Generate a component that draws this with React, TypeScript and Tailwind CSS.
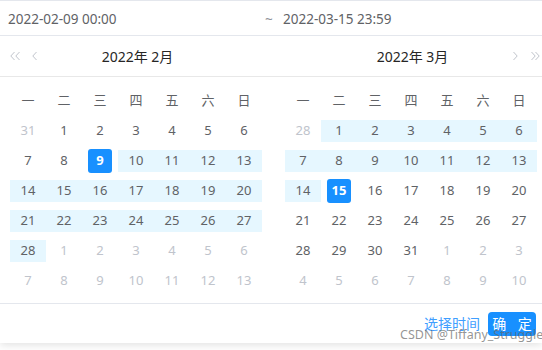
import React from 'react';

type Day = { n: number; muted?: boolean; range?: boolean; selected?: boolean };

const weekdays = ['一', '二', '三', '四', '五', '六', '日'];

const feb: Day[][] = [
  [{ n: 31, muted: true }, { n: 1 }, { n: 2 }, { n: 3 }, { n: 4 }, { n: 5 }, { n: 6 }],
  [{ n: 7 }, { n: 8 }, { n: 9, selected: true }, { n: 10, range: true }, { n: 11, range: true }, { n: 12, range: true }, { n: 13, range: true }],
  [14, 15, 16, 17, 18, 19, 20].map((n) => ({ n, range: true })),
  [21, 22, 23, 24, 25, 26, 27].map((n) => ({ n, range: true })),
  [{ n: 28, range: true }, ...[1, 2, 3, 4, 5, 6].map((n) => ({ n, muted: true }))],
  [7, 8, 9, 10, 11, 12, 13].map((n) => ({ n, muted: true })),
];

const mar: Day[][] = [
  [{ n: 28, muted: true }, ...[1, 2, 3, 4, 5, 6].map((n) => ({ n, range: true }))],
  [7, 8, 9, 10, 11, 12, 13].map((n) => ({ n, range: true })),
  [{ n: 14, range: true }, { n: 15, selected: true }, { n: 16 }, { n: 17 }, { n: 18 }, { n: 19 }, { n: 20 }],
  [21, 22, 23, 24, 25, 26, 27].map((n) => ({ n })),
  [{ n: 28 }, { n: 29 }, { n: 30 }, { n: 31 }, ...[1, 2, 3].map((n) => ({ n, muted: true }))],
  [4, 5, 6, 7, 8, 9, 10].map((n) => ({ n, muted: true })),
];

const Chevron = ({ dir, double }: { dir: 'left' | 'right'; double?: boolean }) => (
  <svg width={double ? 10 : 6} height="10" viewBox={double ? '0 0 10 10' : '0 0 6 10'} fill="none" stroke="#c0c4cc" strokeWidth="1">
    {dir === 'left' ? (
      <>
        <path d="M4.5 1 L0.8 5 L4.5 9" />
        {double && <path d="M9.5 1 L5.8 5 L9.5 9" />}
      </>
    ) : (
      <>
        <path d="M1.5 1 L5.2 5 L1.5 9" />
        {double && <path d="M5.5 1 L9.2 5 L5.5 9" />}
      </>
    )}
  </svg>
);

const MonthHeader = ({ title, side }: { title: string; side: 'left' | 'right' }) => (
  <div className="w-[252px] h-[40px] flex items-center justify-between">
    <div className="flex items-center gap-[12px] w-[40px]">
      {side === 'left' && (
        <>
          <Chevron dir="left" double />
          <Chevron dir="left" />
        </>
      )}
    </div>
    <div className="text-[14px] text-[#262626]">{title}</div>
    <div className="flex items-center justify-end gap-[12px] w-[40px] -mr-[3px]">
      {side === 'right' && (
        <>
          <Chevron dir="right" />
          <Chevron dir="right" double />
        </>
      )}
    </div>
  </div>
);

const MonthGrid = ({ rows }: { rows: Day[][] }) => (
  <div className="w-[252px] pt-[9px]">
    <div className="grid grid-cols-7 h-[30px] items-center text-[13px] text-[#606266]">
      {weekdays.map((w) => (
        <div key={w} className="text-center">{w}</div>
      ))}
    </div>
    {rows.map((row, i) => (
      <div key={i} className="grid grid-cols-7 h-[30px] items-center text-[13px]">
        {row.map((d, j) => (
          <div key={j} className={`h-[22px] flex items-center justify-center ${d.range ? 'bg-[#e6f7ff]' : ''}`}>
            {d.selected ? (
              <span className="w-[24px] h-[24px] rounded-[3px] bg-[#1890ff] text-white font-bold flex items-center justify-center">
                {d.n}
              </span>
            ) : (
              <span className={d.muted ? 'text-[#c0c4cc]' : 'text-[#606266]'}>{d.n}</span>
            )}
          </div>
        ))}
      </div>
    ))}
  </div>
);

export default function App() {
  return (
    <div className="w-[542px] h-[350px] bg-white overflow-hidden" style={{ fontFamily: '"Noto Sans", "Noto Sans CJK SC", sans-serif' }}>
      <div className="relative h-[343px] border-t border-[#e4e7ed] bg-white shadow-[0_2px_8px_rgba(0,0,0,0.12)]">
        <div className="h-[35px] pt-[2px] flex items-center border-b border-[#e4e7ed] text-[13.5px] text-[#606266]">
          <div className="pl-[8px] w-[265px]">2022-02-09 00:00</div>
          <div className="w-[18px] text-[#909399]">~</div>
          <div>2022-03-15 23:59</div>
        </div>
        <div className="flex border-b border-[#e8e8e8]">
          <div className="pl-[10px] w-[285px]">
            <MonthHeader title="2022年 2月" side="left" />
          </div>
          <MonthHeader title="2022年 3月" side="right" />
        </div>
        <div className="flex">
          <div className="pl-[10px] w-[285px]">
            <MonthGrid rows={feb} />
          </div>
          <MonthGrid rows={mar} />
        </div>
        <div className="border-t border-[#e4e7ed] mt-[7px] h-[40px] flex items-center justify-end gap-[8px] pr-[6px]">
          <span className="text-[14px] text-[#409eff]">选择时间</span>
          <button className="h-[24px] w-[48px] rounded-[4px] bg-[#1890ff] text-white text-[14px] tracking-[4px] pl-[4px] flex items-center justify-center">
            确 定
          </button>
        </div>
        <div className="absolute left-[400px] top-[325px] text-[12.5px] text-[#666]/70 whitespace-nowrap">
          CSDN @Tiffany_Struggle
        </div>
      </div>
    </div>
  );
}
